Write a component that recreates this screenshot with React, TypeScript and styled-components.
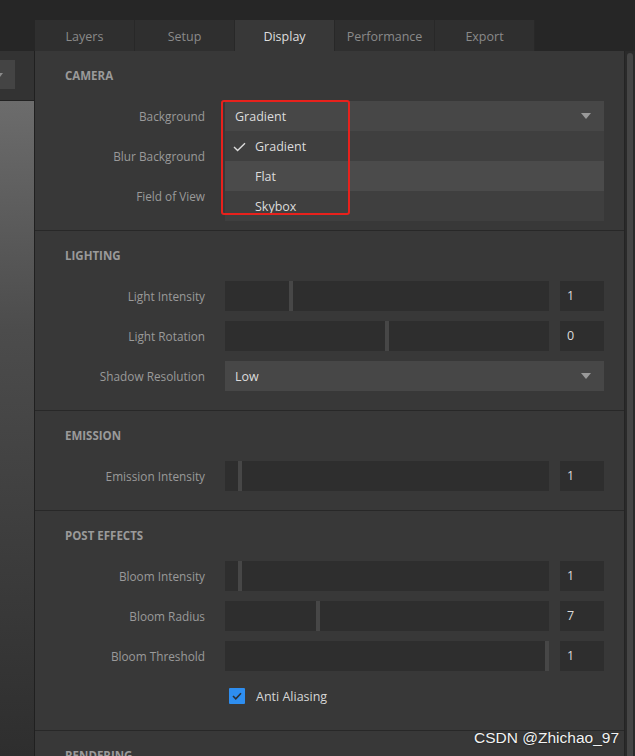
import React from 'react';
import styled, { createGlobalStyle } from 'styled-components';

const GlobalStyle = createGlobalStyle`
  html, body {
    margin: 0;
    padding: 0;
    height: 100%;
    overflow: hidden;
    background: #262626;
  }
  body {
    font-family: 'Open Sans', 'Noto Sans', sans-serif;
  }
`;

const tabs = ['Layers', 'Setup', 'Display', 'Performance', 'Export'];

type SliderRow = { label: string; value: string; pos: number };

const lighting: SliderRow[] = [
  { label: 'Light Intensity', value: '1', pos: 0.2 },
  { label: 'Light Rotation', value: '0', pos: 0.5 },
];

const post: SliderRow[] = [
  { label: 'Bloom Intensity', value: '1', pos: 0.04 },
  { label: 'Bloom Radius', value: '7', pos: 0.285 },
  { label: 'Bloom Threshold', value: '1', pos: 1 },
];

function Caret() {
  return (
    <svg width="10" height="6" viewBox="0 0 10 6">
      <path d="M0 0 L10 0 L5 6 Z" fill="#9a9a9a" />
    </svg>
  );
}

function Slider({ label, value, pos }: SliderRow) {
  return (
    <Row>
      <Label>{label}</Label>
      <Control>
        <Track>
          <Thumb style={{ left: `calc(${pos * 100}% - ${pos * 4}px)` }} />
        </Track>
        <NumberBox>{value}</NumberBox>
      </Control>
    </Row>
  );
}

export default function App() {
  return (
    <>
      <GlobalStyle />
      <Screen>
        <Header>
          {tabs.map((t) => (
            <Tab key={t} active={t === 'Display'}>
              {t}
            </Tab>
          ))}
        </Header>
        <Body>
          <LeftPane>
            <LeftToolbar>
              <MiniSelect>
                <svg width="6" height="4" viewBox="0 0 6 4">
                  <path d="M0 0 L6 0 L3 4 Z" fill="#8a8a8a" />
                </svg>
              </MiniSelect>
            </LeftToolbar>
            <Viewport />
          </LeftPane>
          <Panel>
            <Section>
              <Title>CAMERA</Title>
              <Row>
                <Label>Background</Label>
                <Control>
                  <SelectWrap>
                    <Select>
                      <span>Gradient</span>
                      <Caret />
                    </Select>
                    <Menu>
                      <MenuItem>
                        <Check width="13" height="10" viewBox="0 0 13 10">
                          <path d="M1 5 L4.6 8.6 L12 1.2" fill="none" stroke="#dcdcdc" strokeWidth="1.4" />
                        </Check>
                        Gradient
                      </MenuItem>
                      <MenuItem hover>Flat</MenuItem>
                      <MenuItem>Skybox</MenuItem>
                    </Menu>
                    <Highlight />
                  </SelectWrap>
                </Control>
              </Row>
              <Row>
                <Label>Blur Background</Label>
                <Control />
              </Row>
              <Row>
                <Label>Field of View</Label>
                <Control />
              </Row>
            </Section>

            <Section>
              <Title>LIGHTING</Title>
              {lighting.map((r) => (
                <Slider key={r.label} {...r} />
              ))}
              <Row>
                <Label>Shadow Resolution</Label>
                <Control>
                  <Select>
                    <span>Low</span>
                    <Caret />
                  </Select>
                </Control>
              </Row>
            </Section>

            <Section>
              <Title>EMISSION</Title>
              <Slider label="Emission Intensity" value="1" pos={0.04} />
            </Section>

            <Section>
              <Title>POST EFFECTS</Title>
              {post.map((r) => (
                <Slider key={r.label} {...r} />
              ))}
              <Row>
                <Label />
                <Control>
                  <CheckBox>
                    <svg width="10" height="8" viewBox="0 0 10 8">
                      <path d="M1 4 L3.8 6.8 L9 1.2" fill="none" stroke="#2a2f36" strokeWidth="1.6" />
                    </svg>
                  </CheckBox>
                  <CheckLabel>Anti Aliasing</CheckLabel>
                </Control>
              </Row>
            </Section>

            <Section>
              <Title>RENDERING</Title>
            </Section>
          </Panel>
          <ScrollTrack>
            <ScrollThumb />
          </ScrollTrack>
        </Body>
        <Watermark>CSDN @Zhichao_97</Watermark>
      </Screen>
    </>
  );
}

const Screen = styled.div`
  position: relative;
  width: 635px;
  height: 756px;
  display: flex;
  flex-direction: column;
  background: #262626;
  overflow: hidden;
`;

const Header = styled.div`
  height: 51px;
  flex-shrink: 0;
  display: flex;
  align-items: flex-end;
  padding-left: 35px;
  background: #262626;
  box-sizing: border-box;
`;

const Tab = styled.div<{ active?: boolean }>`
  width: 100px;
  height: 31px;
  padding-top: 2px;
  display: flex;
  align-items: center;
  justify-content: center;
  font-size: 12.5px;
  color: ${(p) => (p.active ? '#dedede' : '#8a8a8a')};
  background: ${(p) => (p.active ? '#383838' : '#2f2f2f')};
  border-right: 1px solid #282828;
  box-sizing: border-box;
`;

const Body = styled.div`
  flex: 1;
  display: flex;
  min-height: 0;
`;

const LeftPane = styled.div`
  width: 35px;
  flex-shrink: 0;
  display: flex;
  flex-direction: column;
  border-right: 1px solid #202020;
  box-sizing: border-box;
`;

const LeftToolbar = styled.div`
  height: 50px;
  padding-top: 9px;
  box-sizing: border-box;
  background: #333333;
  border-bottom: 1px solid #222222;
`;

const MiniSelect = styled.div`
  width: 15px;
  height: 29px;
  background: #444444;
  display: flex;
  align-items: center;
  justify-content: flex-start;
  overflow: hidden;
  svg {
    margin-left: -3px;
  }
`;

const Viewport = styled.div`
  flex: 1;
  background: linear-gradient(180deg, #6c6c6c 0%, #4c4c4c 35%, #2e2e2e 100%);
`;

const Panel = styled.div`
  width: 590px;
  flex-shrink: 0;
  background: #383838;
  border-right: 1px solid #242424;
  box-sizing: border-box;
`;

const Section = styled.div`
  padding: 16px 20px 19px 30px;
  border-bottom: 1px solid #282828;
  display: flex;
  flex-direction: column;
  gap: 10px;
`;

const Title = styled.div`
  font-size: 11.5px;
  font-weight: 700;
  line-height: 18px;
  color: #9a9a9a;
  margin-bottom: 6px;
`;

const Row = styled.div`
  display: flex;
  align-items: center;
  height: 30px;
  gap: 20px;
`;

const Label = styled.div`
  width: 140px;
  flex-shrink: 0;
  text-align: right;
  font-size: 11.8px;
  color: #9a9a9a;
`;

const Control = styled.div`
  flex: 1;
  height: 100%;
  display: flex;
  align-items: center;
  gap: 11px;
`;

const Track = styled.div`
  position: relative;
  flex: 1;
  height: 30px;
  background: #2e2e2e;
`;

const Thumb = styled.div`
  position: absolute;
  top: 0;
  width: 4px;
  height: 100%;
  background: #474747;
`;

const NumberBox = styled.div`
  width: 44px;
  height: 30px;
  box-sizing: border-box;
  padding-left: 7px;
  background: #2e2e2e;
  color: #dcdcdc;
  font-size: 12.5px;
  line-height: 30px;
`;

const SelectWrap = styled.div`
  position: relative;
  flex: 1;
  height: 30px;
`;

const Select = styled.div`
  flex: 1;
  height: 30px;
  display: flex;
  align-items: center;
  justify-content: space-between;
  padding: 0 13px 0 10px;
  box-sizing: border-box;
  background: #474747;
  color: #dcdcdc;
  font-size: 12.5px;
`;

const Menu = styled.div`
  position: absolute;
  top: 30px;
  left: 0;
  right: 0;
  z-index: 2;
  background: #3f3f3f;
`;

const MenuItem = styled.div<{ hover?: boolean }>`
  position: relative;
  height: 30px;
  display: flex;
  align-items: center;
  padding-left: 30px;
  background: ${(p) => (p.hover ? '#4b4b4b' : '#3f3f3f')};
  color: #dcdcdc;
  font-size: 12.5px;
`;

const Check = styled.svg`
  position: absolute;
  left: 8px;
  top: 11px;
`;

const Highlight = styled.div`
  position: absolute;
  left: -4px;
  top: -1px;
  width: 129px;
  height: 115px;
  border: 2px solid #e8211c;
  border-radius: 3px;
  box-sizing: border-box;
  z-index: 3;
`;

const CheckBox = styled.div`
  width: 16px;
  height: 16px;
  margin-left: 4px;
  display: flex;
  align-items: center;
  justify-content: center;
  background: #2e8ef0;
  border-radius: 1px;
`;

const CheckLabel = styled.div`
  font-size: 12.5px;
  color: #d6d6d6;
`;

const ScrollTrack = styled.div`
  flex: 1;
  background: #2a2a2a;
  padding: 2px 2px 0 2px;
`;

const ScrollThumb = styled.div`
  height: 100%;
  background: #454545;
  border-radius: 3px 3px 0 0;
`;

const Watermark = styled.div`
  position: absolute;
  right: 16px;
  bottom: 9px;
  font-family: 'Liberation Sans', Arial, sans-serif;
  font-size: 15.5px;
  color: #f2f2f2;
  text-shadow: 0 0 2px rgba(0, 0, 0, 0.6);
  z-index: 5;
`;
